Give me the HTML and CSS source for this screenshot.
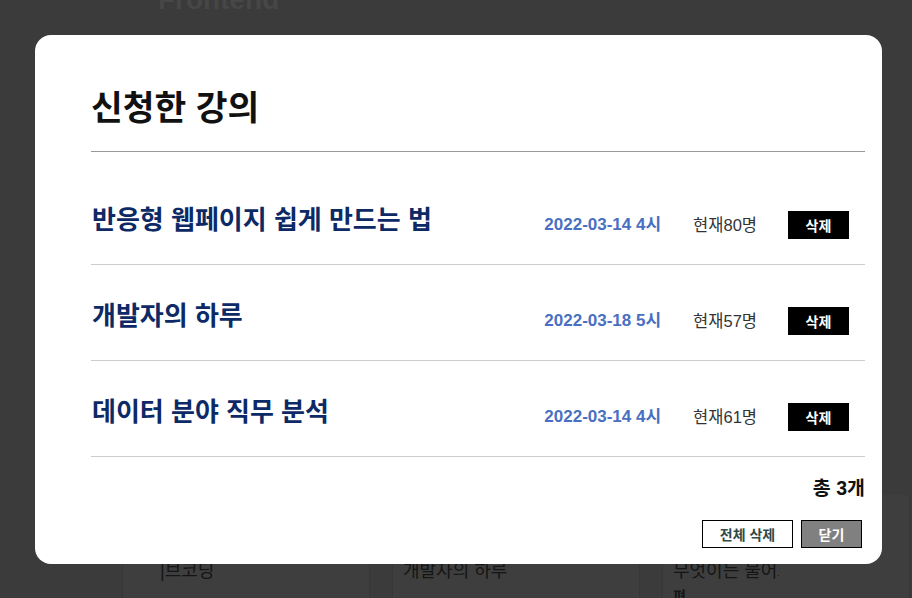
FILE: index.html
```html
<!DOCTYPE html>
<html lang="ko">
<head>
<meta charset="utf-8">
<title>신청한 강의</title>
<link rel="stylesheet" href="styles.css">
</head>
<body>
<div class="page">
  <h1 class="page-header">Frontend</h1>
  <div class="cards">
    <div class="card"><div class="card-title first">|브코딩</div></div>
    <div class="card"><div class="card-title">개발자의 하루</div></div>
    <div class="card"><div class="card-title">무엇이든 물어보세요</div><div class="card-sub">펴</div></div>
  </div>
</div>

<div class="overlay">
  <div class="modal">
    <h2 class="modal-title">신청한 강의</h2>
    <ul class="list">
      <li class="row">
        <span class="row-title">반응형 웹페이지 쉽게 만드는 법</span>
        <span class="row-date">2022-03-14 4시</span>
        <span class="row-count">현재80명</span>
        <button class="btn-del">삭제</button>
      </li>
      <li class="row">
        <span class="row-title">개발자의 하루</span>
        <span class="row-date">2022-03-18 5시</span>
        <span class="row-count">현재57명</span>
        <button class="btn-del">삭제</button>
      </li>
      <li class="row">
        <span class="row-title">데이터 분야 직무 분석</span>
        <span class="row-date">2022-03-14 4시</span>
        <span class="row-count">현재61명</span>
        <button class="btn-del">삭제</button>
      </li>
    </ul>
    <div class="total">총 3개</div>
    <div class="actions">
      <button class="btn-all">전체 삭제</button>
      <button class="btn-close">닫기</button>
    </div>
  </div>
</div>
</body>
</html>
```

FILE: styles.css
```css
* { box-sizing: border-box; }
html, body {
  margin: 0;
  padding: 0;
  height: 100%;
  overflow: hidden;
}
body {
  background: #3a3b3a;
  font-family: "Liberation Sans", "Noto Sans CJK KR", sans-serif;
}
.page-header {
  margin: -16px 0 0 0;
  padding-left: 158px;
  font-size: 28px;
  line-height: 32px;
  font-weight: 700;
  color: #464746;
}
.cards {
  display: grid;
  grid-template-columns: 248px 248px 248px;
  column-gap: 22px;
  padding-left: 122px;
  margin-top: 479px;
}
.card {
  background: #3d3e3d;
  border-left: 1px solid #363736;
  border-right: 1px solid #363736;
  height: 110px;
  padding: 63px 0 0 10px;
}
.card-title {
  font-size: 18px;
  line-height: 26px;
  color: #141514;
  width: 106px;
  white-space: nowrap;
  overflow: hidden;
}
.card-title.first { padding-left: 27px; width: auto; }
.card-sub {
  font-size: 14px;
  font-weight: 700;
  color: #141514;
  line-height: 20px;
  margin-top: 2px;
}

.overlay {
  position: fixed;
  inset: 0;
  padding: 35px 0 0 35px;
}
.modal {
  width: 847px;
  height: 529px;
  background: #fff;
  border-radius: 16px;
  padding: 50px 17px 16px 56px;
  display: flex;
  flex-direction: column;
}
.modal-title {
  margin: 0;
  font-size: 34.5px;
  line-height: 46px;
  font-weight: 700;
  color: #111;
  padding-bottom: 20px;
  border-bottom: 1px solid #999;
}
.list {
  list-style: none;
  margin: 0;
  padding: 17px 0 0 0;
}
.row {
  display: flex;
  align-items: flex-end;
  padding: 34px 16px 27px 1px;
  border-bottom: 1px solid #ccc;
}
.row-title {
  flex: 1;
  font-size: 26px;
  line-height: 34px;
  font-weight: 700;
  color: #0d2a66;
}
.row-date {
  font-size: 17px;
  line-height: 24px;
  font-weight: 700;
  color: #4a6fc1;
  margin-right: 32px;
}
.row-count {
  font-size: 16.5px;
  line-height: 24px;
  color: #333;
  margin-right: 31px;
}
.btn-del {
  width: 61px;
  height: 28px;
  background: #000;
  color: #fff;
  border: none;
  font-family: inherit;
  font-size: 14px;
  font-weight: 700;
  padding: 0;
  margin-bottom: -2px;
}
.total {
  text-align: right;
  font-size: 19.5px;
  line-height: 26px;
  font-weight: 700;
  color: #111;
  margin-top: 18px;
}
.actions {
  display: flex;
  justify-content: flex-end;
  gap: 8px;
  margin-top: auto;
  padding-right: 3px;
}
.btn-all, .btn-close {
  height: 28px;
  border: 1px solid #000;
  font-family: inherit;
  font-size: 14px;
  font-weight: 700;
  padding: 0;
}
.btn-all {
  width: 91px;
  background: #fff;
  color: #2f4a4a;
}
.btn-close {
  width: 61px;
  background: #808080;
  color: #fff;
}
```
